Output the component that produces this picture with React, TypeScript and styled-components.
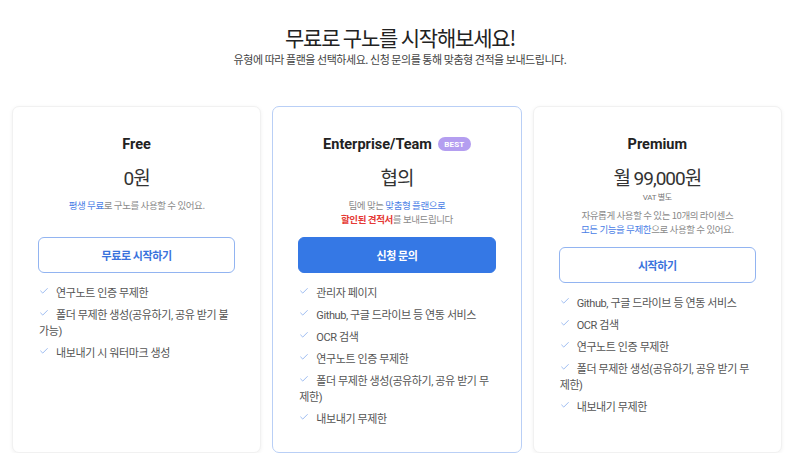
import React from "react";
import styled, { createGlobalStyle, css } from "styled-components";
import { Check } from "lucide-react";

const GlobalStyle = createGlobalStyle`
  * { box-sizing: border-box; }
  body {
    margin: 0;
    background: #fff;
    font-family: Roboto, "Noto Sans CJK KR", sans-serif;
  }
`;

type Variant = "outline" | "filled";

interface Plan {
  id: string;
  name: string;
  best?: boolean;
  price: string;
  note?: string;
  desc: () => React.ReactNode;
  button: string;
  variant: Variant;
  features: string[];
  highlight?: boolean;
}

const PLANS: Plan[] = [
  {
    id: "free",
    name: "Free",
    price: "0원",
    desc: () => (
      <DescLine>
        <Blue>평생 무료</Blue>로 구노를 사용할 수 있어요.
      </DescLine>
    ),
    button: "무료로 시작하기",
    variant: "outline",
    features: [
      "연구노트 인증 무제한",
      "폴더 무제한 생성(공유하기, 공유 받기 불가능)",
      "내보내기 시 워터마크 생성",
    ],
  },
  {
    id: "team",
    name: "Enterprise/Team",
    best: true,
    price: "협의",
    desc: () => (
      <>
        <DescLine>
          팀에 맞는 <Blue>맞춤형 플랜으로</Blue>
        </DescLine>
        <DescLine>
          <Red>할인된 견적서</Red>를 보내드립니다
        </DescLine>
      </>
    ),
    button: "신청 문의",
    variant: "filled",
    highlight: true,
    features: [
      "관리자 페이지",
      "Github, 구글 드라이브 등 연동 서비스",
      "OCR 검색",
      "연구노트 인증 무제한",
      "폴더 무제한 생성(공유하기, 공유 받기 무제한)",
      "내보내기 무제한",
    ],
  },
  {
    id: "premium",
    name: "Premium",
    price: "월 99,000원",
    note: "VAT 별도",
    desc: () => (
      <>
        <DescLine>자유롭게 사용할 수 있는 10개의 라이센스</DescLine>
        <DescLine>
          <Blue>모든 기능을 무제한</Blue>으로 사용할 수 있어요.
        </DescLine>
      </>
    ),
    button: "시작하기",
    variant: "outline",
    features: [
      "Github, 구글 드라이브 등 연동 서비스",
      "OCR 검색",
      "연구노트 인증 무제한",
      "폴더 무제한 생성(공유하기, 공유 받기 무제한)",
      "내보내기 무제한",
    ],
  },
];

const App = () => {
  return (
    <>
      <GlobalStyle />
      <Page>
        <Heading>
          <Title>무료로 구노를 시작해보세요!</Title>
          <SubTitle>
            유형에 따라 플랜을 선택하세요. 신청 문의를 통해 맞춤형 견적을
            보내드립니다.
          </SubTitle>
        </Heading>

        <CardGrid>
          {PLANS.map((plan) => (
            <Card key={plan.id} $highlight={plan.highlight}>
              <PlanName>
                {plan.name}
                {plan.best && <Badge>BEST</Badge>}
              </PlanName>
              <Price>{plan.price}</Price>
              {plan.note && <Note>{plan.note}</Note>}
              <Desc>{plan.desc()}</Desc>
              <PlanButton $variant={plan.variant}>{plan.button}</PlanButton>
              <FeatureList>
                {plan.features.map((feature) => (
                  <Feature key={feature}>
                    <CheckIcon size={10} strokeWidth={2} />
                    {feature}
                  </Feature>
                ))}
              </FeatureList>
            </Card>
          ))}
        </CardGrid>
      </Page>
    </>
  );
};

const Page = styled.main`
  width: 800px;
  padding-top: 23px;
`;

const Heading = styled.header`
  display: flex;
  flex-direction: column;
  align-items: center;
  margin-bottom: 39px;
`;

const Title = styled.h1`
  margin: 0;
  font-family: "Noto Sans CJK KR", sans-serif;
  font-size: 21px;
  font-weight: 400;
  line-height: 28px;
  letter-spacing: -1.2px;
  color: #222;
`;

const SubTitle = styled.p`
  margin: 0;
  font-family: "Noto Sans CJK KR", sans-serif;
  font-size: 11px;
  line-height: 16px;
  letter-spacing: -0.45px;
  color: #444;
`;

const CardGrid = styled.section`
  width: 770px;
  margin-left: 12px;
  display: grid;
  grid-template-columns: repeat(3, 1fr);
  gap: 11px;
`;

const Card = styled.article<{ $highlight?: boolean }>`
  height: 347px;
  padding: 27px 25px 0;
  display: flex;
  flex-direction: column;
  align-items: stretch;
  background: #fff;
  border-radius: 7px;
  ${({ $highlight }) =>
    $highlight
      ? css`
          border: 1px solid #b9cff6;
        `
      : css`
          border: 1px solid #f1f1f1;
          box-shadow: 0 1px 4px rgba(0, 0, 0, 0.06);
        `}
`;

const PlanName = styled.h2`
  margin: 0;
  display: flex;
  align-items: center;
  justify-content: center;
  gap: 6px;
  height: 20px;
  font-family: Roboto, "Noto Sans CJK KR", sans-serif;
  font-size: 14.5px;
  font-weight: 700;
  color: #222;
`;

const Badge = styled.span`
  display: inline-flex;
  align-items: center;
  justify-content: center;
  width: 33px;
  height: 14px;
  border-radius: 7px;
  background: #b49ef0;
  color: #fff;
  font-size: 8px;
  font-weight: 700;
  letter-spacing: 0.2px;
`;

const Price = styled.div`
  margin-top: 11px;
  text-align: center;
  font-family: Roboto, "Noto Sans CJK KR", sans-serif;
  font-size: 19px;
  line-height: 28px;
  letter-spacing: -1px;
  color: #333;
`;

const Note = styled.div`
  text-align: center;
  font-family: Roboto, "Noto Sans CJK KR", sans-serif;
  font-size: 8px;
  line-height: 10px;
  letter-spacing: -0.3px;
  color: #777;
`;

const Desc = styled.div`
  margin-top: 6px;
  min-height: 27px;
  display: flex;
  flex-direction: column;
  align-items: center;
`;

const DescLine = styled.p`
  margin: 0;
  font-family: "Noto Sans CJK KR", sans-serif;
  font-size: 9.5px;
  line-height: 13.5px;
  letter-spacing: -0.4px;
  color: #8a8a8a;
`;

const Blue = styled.span`
  color: #4a80e6;
`;

const Red = styled.span`
  color: #e53935;
  font-weight: 700;
`;

const PlanButton = styled.button<{ $variant: Variant }>`
  margin-top: 11px;
  height: 36px;
  border-radius: 6px;
  font-family: "Noto Sans CJK KR", sans-serif;
  font-size: 11px;
  font-weight: 700;
  letter-spacing: -0.4px;
  cursor: pointer;
  ${({ $variant }) =>
    $variant === "filled"
      ? css`
          border: 1px solid #3578e5;
          background: #3578e5;
          color: #fff;
        `
      : css`
          border: 1px solid #92b4f1;
          background: #fff;
          color: #3a72dc;
        `}
`;

const FeatureList = styled.ul`
  margin: 13px 0 0;
  padding: 0 0 0 1px;
  list-style: none;
  display: flex;
  flex-direction: column;
  gap: 6px;
`;

const Feature = styled.li`
  font-family: Roboto, "Noto Sans CJK KR", sans-serif;
  font-size: 11px;
  line-height: 16px;
  letter-spacing: -0.4px;
  color: #555;
`;

const CheckIcon = styled(Check)`
  color: #8aaeee;
  margin-right: 7px;
  vertical-align: 1px;
`;

export default App;
